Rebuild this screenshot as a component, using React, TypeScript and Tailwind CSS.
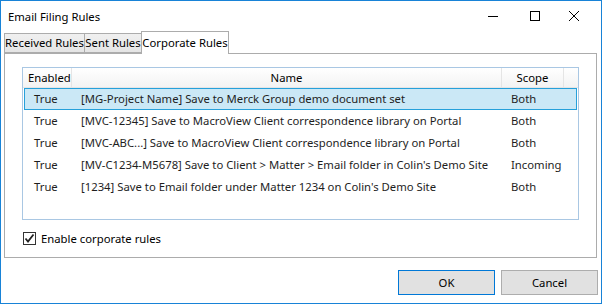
import React from "react";

const rules = [
  { enabled: "True", name: "[MG-Project Name] Save to Merck Group demo document set", scope: "Both" },
  { enabled: "True", name: "[MVC-12345] Save to MacroView Client correspondence library on Portal", scope: "Both" },
  { enabled: "True", name: "[MVC-ABC...] Save to MacroView Client correspondence library on Portal", scope: "Both" },
  { enabled: "True", name: "[MV-C1234-M5678] Save to Client > Matter > Email folder in Colin's Demo Site", scope: "Incoming" },
  { enabled: "True", name: "[1234] Save to Email folder under Matter 1234 on Colin's Demo Site", scope: "Both" },
];

export default function App() {
  return (
    <div
      className="w-[602px] h-[304px] border border-[#1883d7] bg-white flex flex-col text-[11.3px] text-black leading-none whitespace-nowrap"
      style={{ fontFamily: '"Segoe UI", "Noto Sans", sans-serif' }}
    >
      {/* title bar */}
      <div className="h-[29px] flex items-center shrink-0">
        <span className="pl-[7px] pt-[2px]">Email Filing Rules</span>
        <div className="ml-auto flex items-center h-full">
          <div className="w-[46px] h-full flex items-center justify-center pl-[2px]">
            <svg width="10" height="10" viewBox="0 0 10 10">
              <path d="M0 5.5h10" stroke="#000" strokeWidth="1" />
            </svg>
          </div>
          <div className="w-[40px] h-full flex items-center justify-center">
            <svg width="10" height="10" viewBox="0 0 10 10">
              <rect x="0.5" y="0.5" width="9" height="9" fill="none" stroke="#000" strokeWidth="1" />
            </svg>
          </div>
          <div className="w-[46px] h-full flex items-center justify-center pr-[8px]">
            <svg width="10" height="10" viewBox="0 0 10 10">
              <path d="M0 0L10 10M10 0L0 10" stroke="#000" strokeWidth="1" />
            </svg>
          </div>
        </div>
      </div>

      {/* tabs */}
      <div className="px-[3px] flex flex-col">
        <div className="flex items-end h-[24px] relative z-10 -mb-px">
          <div className="h-[20px] flex items-center justify-center border border-[#acacac] bg-gradient-to-b from-[#f0f0f0] to-[#e5e5e5] w-[81px] mb-px">
            Received Rules
          </div>
          <div className="h-[20px] flex items-center justify-center border border-l-0 border-[#acacac] bg-gradient-to-b from-[#f0f0f0] to-[#e5e5e5] w-[57px] mb-px">
            Sent Rules
          </div>
          <div className="h-[23px] flex items-center justify-center border border-b-0 border-[#acacac] bg-white w-[88px] -ml-px pb-[1px]">
            Corporate Rules
          </div>
        </div>
        <div className="h-[205px] w-[593px] border border-[#acacac] bg-white pt-[13px] px-[17px] flex flex-col">
          {/* list */}
          <div className="h-[153px] border border-[#a9c7e3] flex flex-col">
            <div className="h-[20px] flex bg-gradient-to-b from-white to-[#f3f3f3] border-b border-[#e5e5e5]">
              <div className="w-[49px] border-r border-[#e5e5e5] flex items-center pl-[5px]">Enabled</div>
              <div className="w-[430px] border-r border-[#e5e5e5] flex items-center justify-center">Name</div>
              <div className="w-[62px] border-r border-[#e5e5e5] flex items-center justify-center">Scope</div>
              <div className="flex-1" />
            </div>
            <div className="flex flex-col pl-px pr-px">
              {rules.map((r, i) => (
                <div
                  key={i}
                  className={`h-[22px] flex items-center border ${
                    i === 0 ? "bg-[#cbe8f6] border-[#26a0da] h-[21px]" : "border-transparent"
                  } text-[#1e1e1e]`}
                >
                  <div className="w-[48px] pl-[9px]">{r.enabled}</div>
                  <div className="w-[430px] pl-[8px]">{r.name}</div>
                  <div className="pl-[8px]">{r.scope}</div>
                </div>
              ))}
            </div>
          </div>
          {/* checkbox */}
          <div className="flex items-center mt-[12px] pl-px">
            <div className="w-[13px] h-[13px] border border-[#333] bg-white flex items-center justify-center">
              <svg width="11" height="11" viewBox="0 0 11 11">
                <path d="M1.5 5.5L4 8.5L9.5 1.5" fill="none" stroke="#212121" strokeWidth="1.8" />
              </svg>
            </div>
            <span className="ml-[5px]">Enable corporate rules</span>
          </div>
        </div>
      </div>

      {/* buttons */}
      <div className="flex justify-end gap-[6px] pr-[3px] mt-[12px]">
        <button className="w-[97px] h-[25px] bg-[#e1e1e1] border border-[#0078d7] flex items-center justify-center">
          OK
        </button>
        <button className="w-[97px] h-[25px] bg-[#e1e1e1] border border-[#adadad] flex items-center justify-center">
          Cancel
        </button>
      </div>
    </div>
  );
}
